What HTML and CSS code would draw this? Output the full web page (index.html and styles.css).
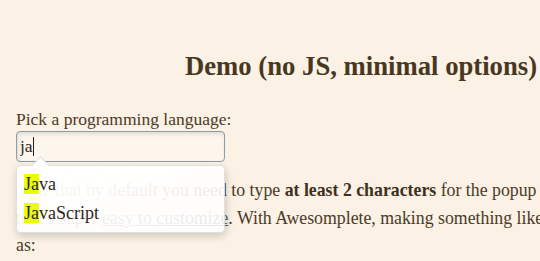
FILE: index.html
```html
<!DOCTYPE html>
<html lang="en">
<head>
<meta charset="utf-8">
<title>Awesomplete demo</title>
<link rel="stylesheet" href="styles.css">
</head>
<body>
<main class="page">
  <h2 class="demo-title">Demo (no JS, minimal options)</h2>
  <label class="field-label" for="lang">Pick a programming language:</label>
  <div class="awesomplete">
    <input id="lang" class="field-input" type="text" value="ja">
    <span class="caret"></span>
    <ul class="suggestions">
      <li><mark>Ja</mark>va</li>
      <li><mark>Ja</mark>vaScript</li>
    </ul>
  </div>
  <p class="note">
    <span class="line">Note that by default you need to type <strong>at least 2 characters</strong> for the popup to show up, though</span>
    <span class="line">that’s super <a href="#" class="link">easy to customize</a>. With Awesomplete, making something like this can be as easy</span>
    <span class="line">as:</span>
  </p>
</main>
</body>
</html>
```
FILE: styles.css
```css
html, body {
  margin: 0;
  padding: 0;
}
body {
  background: #fbf1e4;
  color: #4a3b29;
  font-family: "Liberation Serif", "Times New Roman", serif;
  font-size: 17.5px;
  overflow: hidden;
  width: 540px;
  height: 261px;
}
.page {
  width: 690px;
  padding: 51px 16px 0;
}
.demo-title {
  margin: 0;
  font-size: 26.7px;
  line-height: 30px;
  font-weight: bold;
  text-align: center;
  color: #483822;
}
.field-label {
  display: block;
  margin-top: 26px;
  line-height: 24px;
}
.awesomplete {
  position: relative;
  width: 209px;
}
.field-input {
  display: block;
  box-sizing: border-box;
  width: 209px;
  height: 31px;
  margin: 0;
  padding: 0 3px;
  font: inherit;
  color: #2f2820;
  background: rgba(255, 255, 255, 0.35);
  border: 1px solid #8e9ca8;
  border-radius: 4px;
  box-shadow: inset 1px 2px 4px rgba(0, 0, 0, 0.12);
  outline: none;
}
.caret {
  position: absolute;
  left: 17px;
  top: 6px;
  width: 1px;
  height: 19px;
  background: #222;
}
.suggestions {
  position: absolute;
  top: 34px;
  left: 0;
  z-index: 1;
  box-sizing: border-box;
  width: 209px;
  margin: 0;
  padding: 4px 0;
  list-style: none;
  border-radius: 5px;
  border: 1px solid rgba(0, 0, 0, 0.12);
  background: linear-gradient(to bottom right, #fff, rgba(255, 255, 255, 0.85));
  box-shadow: 1px 3px 9px rgba(0, 0, 0, 0.18);
  color: #2e2821;
}
.suggestions::before {
  content: "";
  position: absolute;
  top: -7px;
  left: 17px;
  width: 0;
  height: 0;
  padding: 6px;
  background: #fff;
  border: 1px solid rgba(0, 0, 0, 0.12);
  border-right: 0;
  border-bottom: 0;
  transform: rotate(45deg);
}
.suggestions li {
  position: relative;
  padding: 3px 7px;
  line-height: 23px;
  font-size: 18px;
}
.suggestions mark {
  background: #eaff00;
  color: inherit;
}
.note {
  margin: 15px 0 0;
  line-height: 27.5px;
  font-size: 17.8px;
}
.line {
  display: block;
  white-space: nowrap;
}
.note strong {
  color: #3e3020;
}
.link {
  color: #55687c;
  text-decoration: underline;
}
```
